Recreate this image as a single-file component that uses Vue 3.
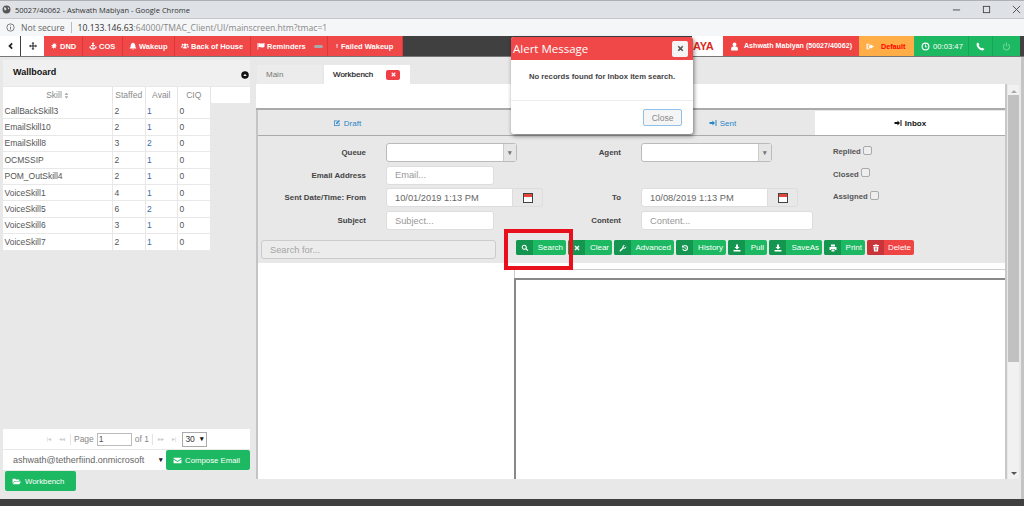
<script setup>
const icons = {
  search: 'M6.5 1.5a5 5 0 1 0 3 9l3.6 3.6 1.6-1.6-3.6-3.6a5 5 0 0 0-4.6-7.400zm0 2a3 3 0 1 1 0 6 3 3 0 0 1 0-6z',
  clear: 'M3 5l2-2 3 3 3-3 2 2-3 3 3 3-2 2-3-3-3 3-2-2 3-3z',
  wrench: 'M14.500 4.500l-3 3-2-.5-.5-2 3-3a4 4 0 0 0-5 5L1.500 12.500a1.400 1.400 0 0 0 2 2L9 9a4 4 0 0 0 5.500-4.500z',
  history: 'M8 2a6 6 0 1 1-5.800 7.500h2A4 4 0 1 0 5 5.200L7 7H2V2l1.600 1.800A6 6 0 0 1 8 2zM7.300 5h1.400v3.300l2 1.200-.7 1.100-2.700-1.600z',
  pull: 'M6 1h4v5h3L8 11 3 6h3zM1 12h14v3H1z',
  print: 'M4 1h8v4H4zM1 6h14v6h-3v-2H4v2H1zM5 11h6v4H5z',
  trash: 'M6 1h4l1 1h3v2H2V2h3zM3 5h10l-1 10H4zM6 7v6h1V7zM9 7v6h1V7z',
  dnd: 'M8 1l1.500 3L13 3l-2 3 3 2-3 1 1 4-3-2-2 3-1-3-3 1 2-3-3-2 4-1-1-3 3 1z',
  anchor: 'M8 1a2 2 0 0 1 1 3.700V6h3v2H9v5a4 4 0 0 0 3.500-3L11 9h4v4l-1-1a7 7 0 0 1-12 0l-1 1V9h4l-1.500 1A4 4 0 0 0 7 13V8H4V6h3V4.700A2 2 0 0 1 8 1z',
  bell: 'M8 1a1 1 0 0 1 1 1.100A4.500 4.500 0 0 1 12.500 6.500c0 3 .8 4.500 2 5.500v1h-13v-1c1.200-1 2-2.500 2-5.500A4.500 4.500 0 0 1 7 2.100 1 1 0 0 1 8 1zM6.500 14h3a1.500 1.500 0 0 1-3 0z',
  group: 'M8 3a2.500 2.500 0 1 1 0 5 2.500 2.500 0 0 1 0-5zM3.300 3.500a2 2 0 1 1 0 4 2 2 0 0 1 0-4zM12.700 3.500a2 2 0 1 1 0 4 2 2 0 0 1 0-4zM4.500 13V10.500C4.500 9 6 8.500 8 8.500s3.500.5 3.500 2.500v2zM0 11V9.500C0 8.300 1.500 8 3.500 8 3.200 9 3.300 10 3.300 11zM16 11V9.500C16 8.300 14.500 8 12.500 8c.3 1 .2 2 .2 3z',
  flag: 'M1 2h1.500v13H1zM3 3c3-1.500 5 1 8.500 0 1.200-.3 2.500-.8 3.500-1.500v8c-1 .8-2.300 1.300-3.500 1.500-3.500.6-5.500-2-8.500-.5z',
  bang: 'M5.500 1h5l-1 10h-3zM6 12h4v3H6z',
  user: 'M8 1a3.500 3.500 0 1 1 0 7 3.500 3.500 0 0 1 0-7zM2 15v-3c0-2.500 2-4 3.500-4h5C12 8 14 9.500 14 12v3z',
  signout: 'M1 3h5v2H3v6h3v2H1zM8 4l6 4-6 4V10H5V6h3z',
  clock: 'M8 1a7 7 0 1 1 0 14A7 7 0 0 1 8 1zm0 2a5 5 0 1 0 0 10A5 5 0 0 0 8 3zM7.200 4.500h1.500V8h2.500v1.500h-4z',
  phone: 'M3.500 1L6 4.500 4.800 6.200c.8 2 2.500 3.800 5 5l1.500-1.200L15 12.500c-.5 1.500-1.800 2.500-3 2.500C6.500 15 1 9.500 1 4c0-1.200 1-2.500 2.500-3z',
  power: 'M7 1h2v7H7zM4.500 3l1 1.700a4.500 4.500 0 1 0 5 0l1-1.700a6.500 6.500 0 1 1-7 0z',
  edit: 'M2 3h7v1.500H3.500v8h8V8H13v6H2zM6 8l6-6 2 2-6 6H6z',
  arrow: 'M1 6h6V3l5 5-5 5v-3H1zM13 2h2v12h-2z',
  envelope: 'M1 3h14v1.500L8 9 1 4.500zM1 6l7 4.500L15 6v7H1z',
  folder: 'M1 3h5l1 1.500h6V7H4L1 12zM4.500 8H16l-3 5H1.500z',
  back: 'M11 1.500l2.500 2.500-4 4 4 4-2.500 2.500L4.500 8z',
  move: 'M8 0l3 3H9v4h4V5l3 3-3 3V9H9v4h2l-3 3-3-3h2V9H3v2L0 8l3-3v2h4V3H5z'
}
const navItems = [
  { icon: 'dnd', label: 'DND', w: 39 },
  { icon: 'anchor', label: 'COS', w: 40 },
  { icon: 'bell', label: 'Wakeup', w: 52 },
  { icon: 'group', label: 'Back of House', w: 76 },
  { icon: 'flag', label: 'Reminders', w: 77, pill: true },
  { icon: 'bang', label: 'Failed Wakeup', w: 75 }
]
const skills = [
  ['CallBackSkill3', 2, 1, 0], ['EmailSkill10', 2, 1, 0], ['EmailSkill8', 3, 2, 0],
  ['OCMSSIP', 2, 1, 0], ['POM_OutSkill4', 2, 1, 0], ['VoiceSkill1', 4, 1, 0],
  ['VoiceSkill5', 6, 2, 0], ['VoiceSkill6', 3, 1, 0], ['VoiceSkill7', 2, 1, 0]
]
const actions = [
  { icon: 'search', label: 'Search', w: 50 },
  { icon: 'clear', label: 'Clear', w: 44 },
  { icon: 'wrench', label: 'Advanced', w: 60 },
  { icon: 'history', label: 'History', w: 50 },
  { icon: 'pull', label: 'Pull', w: 39 },
  { icon: 'pull', label: 'SaveAs', w: 53 },
  { icon: 'print', label: 'Print', w: 41 },
  { icon: 'trash', label: 'Delete', w: 47, danger: true }
]
</script>

<template>
  <div class="page">
    <div class="titlebar">
      <svg class="globe" viewBox="0 0 16 16"><circle cx="8" cy="8" r="7" fill="#555" /><path d="M3 4l4 1 1 3-3 2zM10 3l3 3-2 2z" fill="#dee1e6" /></svg>
      <span class="title">50027/40062 - Ashwath Mabiyan - Google Chrome</span>
      <div class="winctl">
        <svg viewBox="0 0 10 10"><path d="M1 5.500h8" stroke="#444" /></svg>
        <svg viewBox="0 0 10 10"><rect x="1.500" y="1.500" width="7" height="7" fill="none" stroke="#444" /></svg>
        <svg viewBox="0 0 10 10"><path d="M1 1l8 8M9 1l-8 8" stroke="#444" /></svg>
      </div>
    </div>
    <div class="addressbar">
      <svg class="info" viewBox="0 0 16 16"><circle cx="8" cy="8" r="6.500" fill="none" stroke="#555" stroke-width="1.300" /><path d="M7.300 7h1.400v4.500H7.300zM7.300 4.300h1.400v1.400H7.300z" fill="#555" /></svg>
      <span class="secure">Not secure</span>
      <span class="sep"></span>
      <span class="url"><b>10.133.146.63</b>:64000/TMAC_Client/UI/mainscreen.htm?tmac=1</span>
    </div>

    <div class="navbar">
      <button class="navwhite nb1"><svg viewBox="0 0 16 16"><path :d="icons.back" /></svg></button>
      <button class="navwhite nb2"><svg viewBox="0 0 16 16"><path :d="icons.move" /></svg></button>
      <button v-for="n in navItems" :key="n.label" class="navred" :style="{ width: n.w + 'px' }">
        <svg :class="n.icon" viewBox="0 0 16 16"><path :d="icons[n.icon]" /></svg>
        <span>{{ n.label }}</span>
        <i v-if="n.pill" class="pill"></i>
      </button>
      <div class="navright">
        <div class="logo">AYA</div>
        <div class="nr user"><svg viewBox="0 0 16 16"><path :d="icons.user" /></svg>Ashwath Mabiyan (50027/40062)</div>
        <div class="nr status"><svg viewBox="0 0 16 16"><path :d="icons.signout" /></svg><span>Default</span></div>
        <div class="nr timer"><svg viewBox="0 0 16 16"><path :d="icons.clock" /></svg>00:03:47</div>
        <div class="nr phone"><svg viewBox="0 0 16 16"><path :d="icons.phone" /></svg></div>
        <div class="nr power"><svg viewBox="0 0 16 16"><path :d="icons.power" /></svg></div>
      </div>
    </div>

    <div class="content">
      <aside class="left">
        <div class="wbhead">
          <span>Wallboard</span>
          <svg viewBox="0 0 16 16"><circle cx="8" cy="8" r="7.500" fill="#111" /><path d="M4.500 10L8 5.500 11.500 10z" fill="#eee" /></svg>
        </div>
        <div class="grid">
          <div class="gridhead">
            <span class="c1">Skill
              <svg class="sort" viewBox="0 0 8 10"><path d="M4 0l3 4H1zM4 10L1 6h6z" /></svg>
            </span><span class="c2">Staffed</span><span class="c3">Avail</span><span class="c4">CIQ</span><span class="c5"></span>
          </div>
          <div v-for="s in skills" :key="s[0]" class="gridrow">
            <span class="c1">{{ s[0] }}</span><span class="c2">{{ s[1] }}</span><span class="c3 blue">{{ s[2] }}</span><span class="c4">{{ s[3] }}</span>
          </div>
        </div>
        <div class="pager">
          <span class="pg">|◂</span><span class="pg">◂◂</span><i class="pgsep"></i>
          <span>Page</span><span class="pginput">1</span><span>of 1</span><i class="pgsep"></i>
          <span class="pg">▸▸</span><span class="pg">▸|</span>
          <span class="pgsize">30 <b>▾</b></span>
        </div>
        <div class="compose">
          <div class="emailsel"><span>ashwath@tetherfiind.onmicrosoft</span><b>▾</b></div>
          <button class="greenbtn cbtn"><svg viewBox="0 0 16 16"><path :d="icons.envelope" /></svg>Compose Email</button>
        </div>
        <button class="greenbtn wbbtn"><svg viewBox="0 0 16 16"><path :d="icons.folder" /></svg>Workbench</button>
      </aside>

      <main class="right">
        <div class="tabs">
          <div class="tab">Main</div>
          <div class="tab active">Workbench<span class="tabx"><svg viewBox="0 0 16 16"><path :d="icons.clear" /></svg></span></div>
        </div>
        <div class="panelwrap">
          <div class="panel">
            <div class="topwhite"></div>
            <div class="mailtabs">
              <div class="mt"><svg viewBox="0 0 16 16"><path :d="icons.edit" /></svg>Draft</div>
              <div class="mt"></div>
              <div class="mt"><svg viewBox="0 0 16 16"><path :d="icons.arrow" /></svg>Sent</div>
              <div class="mt on"><svg viewBox="0 0 16 16"><path :d="icons.arrow" /></svg>Inbox</div>
            </div>
            <div class="form">
              <div class="fields">
                <label>Queue</label>
                <div class="combo"><span></span><b>▾</b></div>
                <label>Agent</label>
                <div class="combo"><span></span><b>▾</b></div>
                <div class="check">Replied <i></i></div>

                <label>Email Address</label>
                <div class="inp small ph">Email...</div>
                <label></label>
                <div></div>
                <div class="check">Closed <i></i></div>

                <label>Sent Date/Time: From</label>
                <div class="dategrp"><div class="inp">10/01/2019 1:13 PM</div><span class="cal"><i></i></span></div>
                <label>To</label>
                <div class="dategrp"><div class="inp">10/08/2019 1:13 PM</div><span class="cal"><i></i></span></div>
                <div class="check">Assigned <i></i></div>

                <label>Subject</label>
                <div class="inp small ph">Subject...</div>
                <label>Content</label>
                <div class="inp wide ph">Content...</div>
                <div></div>
              </div>
              <div class="actionrow">
                <div class="searchfor">Search for...</div>
                <div class="actions">
                  <button v-for="a in actions" :key="a.label" class="act" :class="{ danger: a.danger }" :style="{ width: a.w + 'px' }">
                    <span class="acticon"><svg viewBox="0 0 16 16"><path :d="icons[a.icon]" /></svg></span>
                    <span class="acttext">{{ a.label }}</span>
                  </button>
                </div>
              </div>
            </div>
            <div class="results">
              <div class="reslist"></div>
              <div class="resdetail">
                <div class="strip"></div>
                <div class="body"></div>
              </div>
            </div>
          </div>
          <div class="scrollbar">
            <span class="up"></span>
            <span class="thumb"></span>
            <span class="down"></span>
          </div>
        </div>
      </main>
    </div>
    <div class="footer"></div>

    <div class="highlight"></div>
    <div class="modal">
      <div class="mhead"><span>Alert Message</span><button class="mx"><svg viewBox="0 0 16 16"><path :d="icons.clear" /></svg></button></div>
      <div class="mbody">No records found for Inbox item search.</div>
      <div class="mfoot"><button class="mclose">Close</button></div>
    </div>
  </div>
</template>

<style scoped>
.page { position: relative; width: 1024px; height: 506px; overflow: hidden; background: #e8e8e8; font-family: "Liberation Sans", Arial, sans-serif; font-size: 8.500px; color: #444; display: flex; flex-direction: column; }
button { font-family: inherit; border: 0; padding: 0; }
svg { fill: currentColor; display: block; flex: none; }

.titlebar { height: 19px; flex: none; box-sizing: border-box; border-top: 1px solid #aeb0b3; border-bottom: 1px solid #c4c6c9; background: #dee1e6; display: flex; align-items: center; padding-left: 2px; font-family: "Open Sans", sans-serif; font-size: 7.500px; color: #333; }
.globe { width: 9px; height: 9px; margin-right: 4px; }
.winctl { margin-left: auto; display: flex; gap: 21px; margin-right: 3px; }
.winctl svg { width: 9px; height: 9px; fill: none; }
.addressbar { height: 17px; flex: none; background: #f5f6f7; display: flex; align-items: center; padding-left: 6px; font-family: "Open Sans", sans-serif; font-size: 8.600px; color: #666; }
.info { width: 9px; height: 9px; margin-right: 6px; }
.sep { width: 1px; height: 11px; background: #bbb; margin: 0 6px; }
.url { color: #888; }
.url b { font-weight: 400; color: #333; }

.navbar { height: 20px; flex: none; background: #404040; display: flex; align-items: stretch; border-bottom: 1px solid #777; box-sizing: content-box; }
.navwhite { background: #fff; color: #222; display: flex; align-items: center; justify-content: center; }
.navwhite svg { width: 8px; height: 8px; }
.nb1 { width: 20px; margin-right: 1px; }
.nb2 { width: 23px; }
.navred { background: #f04848; color: #fff; font-size: 7.500px; font-weight: 700; display: flex; align-items: center; justify-content: flex-start; padding-left: 6px; gap: 2px; border-right: 1px solid #e23636; box-sizing: border-box; white-space: nowrap; }
.navred svg { width: 8px; height: 8px; }
.navred svg.bang { width: 4px; margin-left: 1px; }
.pill { width: 9px; height: 3px; border-radius: 2px; background: #a9a9a9; margin-left: 6px; }
.navright { margin-left: auto; display: flex; margin-right: 4px; }
.logo { width: 31px; background: #fff; color: #da291c; font-weight: 700; font-size: 11px; letter-spacing: -0.300px; display: flex; align-items: center; padding-left: 1px; box-sizing: border-box; }
.nr { display: flex; align-items: center; color: #fff; font-weight: 700; font-size: 7.500px; white-space: nowrap; box-sizing: border-box; }
.nr svg { width: 9px; height: 9px; }
.user { width: 136px; background: #ef4444; padding-left: 7px; gap: 5px; font-size: 7.100px; }
.status { width: 55px; background: #ffad46; padding-left: 7px; gap: 6px; }
.status span { color: #f00; font-size: 7.200px; }
.timer { width: 55px; background: #1db862; padding-left: 7px; gap: 3px; font-size: 7.700px; font-weight: 400; border-right: 1px solid #18a557; }
.phone { width: 24px; background: #1db862; justify-content: center; border-right: 1px solid #18a557; }
.power { width: 27px; background: #1db862; justify-content: center; color: #6fd49b; }

.content { flex: 1; display: flex; min-height: 0; border-right: 3px solid #c4c4c4; }
.left { width: 247px; margin-left: 3px; flex: none; display: flex; flex-direction: column; }
.wbhead { height: 26px; margin-top: 3px; background: #f0f0f0; display: flex; align-items: flex-start; justify-content: space-between; flex: none; padding: 7px 1px 0 10px; box-sizing: border-box; font-weight: 700; font-size: 9px; color: #111; }
.wbhead svg { width: 8px; height: 8px; margin-top: 4px; }
.grid { flex: 1; font-size: 8.500px; }
.gridhead { display: flex; height: 16px; background: #fff; color: #8a8a8a; align-items: center; text-align: center; margin-top: 1px; }
.gridhead span { height: 100%; display: flex; align-items: center; justify-content: center; gap: 2px; box-sizing: border-box; border-right: 1px solid #e4e4e4; }
.sort { width: 5px; height: 7px; color: #aaa; }
.gridhead .c5 { flex: 1; border: 0; }
.c1 { width: 110px; flex: none; }
.c2, .c3, .c4 { width: 32.500px; flex: none; }
.gridrow { display: flex; height: 16.400px; background: #fff; width: 208px; border-bottom: 1px solid #e8e8e8; box-sizing: border-box; align-items: center; color: #555; }
.gridrow span { height: 100%; display: flex; align-items: center; padding-left: 1.500px; box-sizing: border-box; border-right: 1px solid #e8e8e8; }
.gridrow .blue { color: #3a6ea5; }
.pager { height: 20px; flex: none; background: #fff; display: flex; align-items: center; justify-content: center; gap: 3px; color: #888; margin-bottom: 1px; font-size: 8.500px; padding-right: 2px; }
.pg { color: #ccc; font-size: 5.500px; width: 10px; text-align: center; }
.pgsep { width: 1px; height: 11px; background: #e4e4e4; }
.pginput { width: 32px; height: 11px; border: 1px solid #bbb; line-height: 11px; color: #555; padding-left: 1px; }
.pgsize { height: 15px; width: 25px; border: 1px solid #aaa; box-sizing: border-box; display: flex; align-items: center; justify-content: space-around; color: #333; font-size: 8.500px; }
.pgsize b { font-size: 7px; color: #111; }
.compose { height: 20px; flex: none; display: flex; background: #fff; }
.emailsel { width: 163px; display: flex; align-items: center; justify-content: space-between; padding: 0 3px 0 10px; box-sizing: border-box; color: #666; font-size: 9px; }
.emailsel span { white-space: nowrap; }
.emailsel b { color: #222; font-size: 7px; }
.greenbtn { background: #1db862; color: #fff; border-radius: 2px; display: flex; align-items: center; font-size: 7.800px; }
.cbtn { flex: 1; padding-left: 7px; gap: 3px; }
.cbtn svg { width: 9px; height: 9px; }
.wbbtn { width: 71px; height: 20px; margin: 1px 0 8px 2px; padding-left: 7px; gap: 4px; flex: none; }
.wbbtn svg { width: 9px; height: 9px; }

.right { flex: 1; margin-left: 6px; display: flex; flex-direction: column; min-width: 0; }
.tabs { display: flex; height: 20px; margin-top: 7px; padding-left: 1px; gap: 2px; flex: none; align-items: flex-end; }
.tab { height: 19px; width: 65px; background: #ececec; display: flex; align-items: center; padding-left: 9px; box-sizing: border-box; color: #777; font-size: 8px; }
.tab.active { background: #fff; width: 86px; color: #222; gap: 13px; -webkit-text-stroke: 0.200px #222; }
.tabx { width: 14px; height: 10px; background: #ef3e46; color: #fff; border-radius: 2px; display: flex; align-items: center; justify-content: center; }
.tabx svg { width: 7px; height: 7px; }
.panelwrap { flex: 1; display: flex; min-height: 0; padding-bottom: 20px; }
.panel { width: 751px; display: flex; flex-direction: column; background: #fff; border-left: 2px solid #c4c4c4; border-right: 2px solid #c8c8c8; box-sizing: border-box; }
.topwhite { height: 24px; margin-left: -2px; border-bottom: 2px solid #aaa; flex: none; background: #fff; }
.mailtabs { height: 26px; flex: none; display: grid; grid-template-columns: 178px 194px 185px 1fr; background: #e8e8e8; border-bottom: 1px solid #aaa; box-sizing: border-box; padding-top: 1px; }
.mt { display: flex; align-items: center; justify-content: center; gap: 3px; color: #2a86c8; font-size: 8px; }
.mt svg { width: 8px; height: 8px; }
.mt.on { background: #fff; color: #111; font-weight: 700; }
.form { height: 127px; flex: none; background: #e8e8e8; padding-top: 7px; box-sizing: border-box; }
.fields { display: grid; grid-template-columns: 128px 206px 49px 192px 1fr; grid-auto-rows: 19px; row-gap: 3.700px; }
label { display: flex; align-items: center; justify-content: flex-end; padding-right: 20px; font-weight: 700; color: #444; white-space: nowrap; font-size: 7.900px; }
.combo { width: 131px; height: 19px; background: #fff; border: 1px solid #bbb; border-radius: 3px; display: flex; box-sizing: border-box; }
.combo span { flex: 1; }
.combo b { width: 12px; background: #e6e6e6; border-left: 1px solid #ccc; font-size: 7px; color: #777; display: flex; align-items: center; justify-content: center; }
.inp { height: 19px; background: #fff; border: 1px solid #ddd; border-radius: 3px; display: flex; align-items: center; padding-left: 8px; box-sizing: border-box; font-size: 9.300px; color: #666; }
.ph { color: #999; }
.small { width: 108px; }
.wide { width: 172px; }
.dategrp { display: flex; width: 157px; }
.dategrp .inp { width: 127px; border-radius: 3px 0 0 3px; }
.cal { width: 30px; height: 19px; background: #e8e8e8; border: 1px solid #ddd; border-left: 0; border-radius: 0 3px 3px 0; display: flex; align-items: center; justify-content: center; box-sizing: border-box; }
.cal i { width: 10px; height: 10px; box-sizing: border-box; background: linear-gradient(#e0483c 0 3px, #fff 3px); border: 1px solid #444; display: block; }
.check { font-weight: 700; color: #555; display: flex; align-items: center; gap: 2px; font-size: 7.700px; padding-bottom: 2px; }
.check i { width: 7px; height: 7px; background: #eee; border: 1px solid #aaa; border-radius: 2px; margin-bottom: 3px; }
.actionrow { display: flex; margin-top: 10px; padding-left: 3px; }
.searchfor { width: 235px; height: 19px; background: #ececec; border: 1px solid #ccc; border-radius: 3px; box-sizing: border-box; padding-left: 8px; display: flex; align-items: center; color: #a5a5a5; font-size: 9.300px; }
.actions { display: flex; margin-left: 20px; gap: 2px; height: 15px; }
.act { background: #1db862; color: #fff; display: flex; border-radius: 2px; overflow: hidden; font-size: 8px; font-family: inherit; }
.acticon { width: 17px; background: #149650; display: flex; align-items: center; justify-content: center; flex: none; }
.acticon svg { width: 8px; height: 8px; }
.acttext { flex: 1; display: flex; align-items: center; justify-content: flex-end; padding-right: 3px; white-space: nowrap; }
.act.danger { background: #ef4444; }
.danger .acticon { background: #c8343a; }
.results { flex: 1; display: flex; background: #fff; min-height: 0; }
.reslist { width: 256px; flex: none; }
.resdetail { flex: 1; display: flex; flex-direction: column; }
.strip { height: 8px; margin-top: 6px; border-top: 1px solid #ccc; border-left: 1px solid #ccc; }
.body { flex: 1; border-top: 2px solid #888; border-left: 2px solid #888; }
.scrollbar { width: 11px; margin-left: 1px; background: #f1f1f1; display: flex; flex-direction: column; align-items: center; margin-top: 1px; }
.up { width: 0; height: 0; border: 3px solid transparent; border-top: 0; border-bottom-color: #aaa; margin-top: 5px; }
.thumb { width: 100%; height: 267px; background: #c1c1c1; margin-top: 2px; }
.down { width: 0; height: 0; border: 3px solid transparent; border-bottom: 0; border-top-color: #555; margin-top: auto; margin-bottom: 4px; }
.footer { height: 7px; flex: none; background: #404040; }

.highlight { position: absolute; left: 504px; top: 229px; width: 69px; height: 41px; border: 4px solid #e8101c; box-sizing: border-box; }
.modal { position: absolute; left: 511px; top: 37px; width: 182px; height: 97px; background: #fff; box-shadow: 1px 2px 4px rgba(0,0,0,.5); border-radius: 3px; display: flex; flex-direction: column; }
.mhead { height: 23px; background: #f04848; color: #fff; font-family: "Open Sans", sans-serif; font-size: 11.500px; display: flex; align-items: center; justify-content: space-between; padding: 0 5px 0 2px; border-radius: 3px 3px 0 0; }
.mx { width: 16px; height: 16px; background: #f4f4f4; border-radius: 2px; color: #555; display: flex; align-items: center; justify-content: center; }
.mx svg { width: 9px; height: 9px; }
.mbody { height: 41px; border-bottom: 1px solid #eee; font-weight: 700; color: #444; font-size: 7.700px; text-align: center; padding-top: 12px; box-sizing: border-box; }
.mfoot { flex: 1; display: flex; justify-content: flex-end; align-items: center; padding-right: 11px; }
.mclose { width: 39px; height: 17px; background: #f5f5f5; border: 1px solid #8fc0ea; border-radius: 2px; color: #888; font-size: 8.500px; box-sizing: border-box; }
</style>
